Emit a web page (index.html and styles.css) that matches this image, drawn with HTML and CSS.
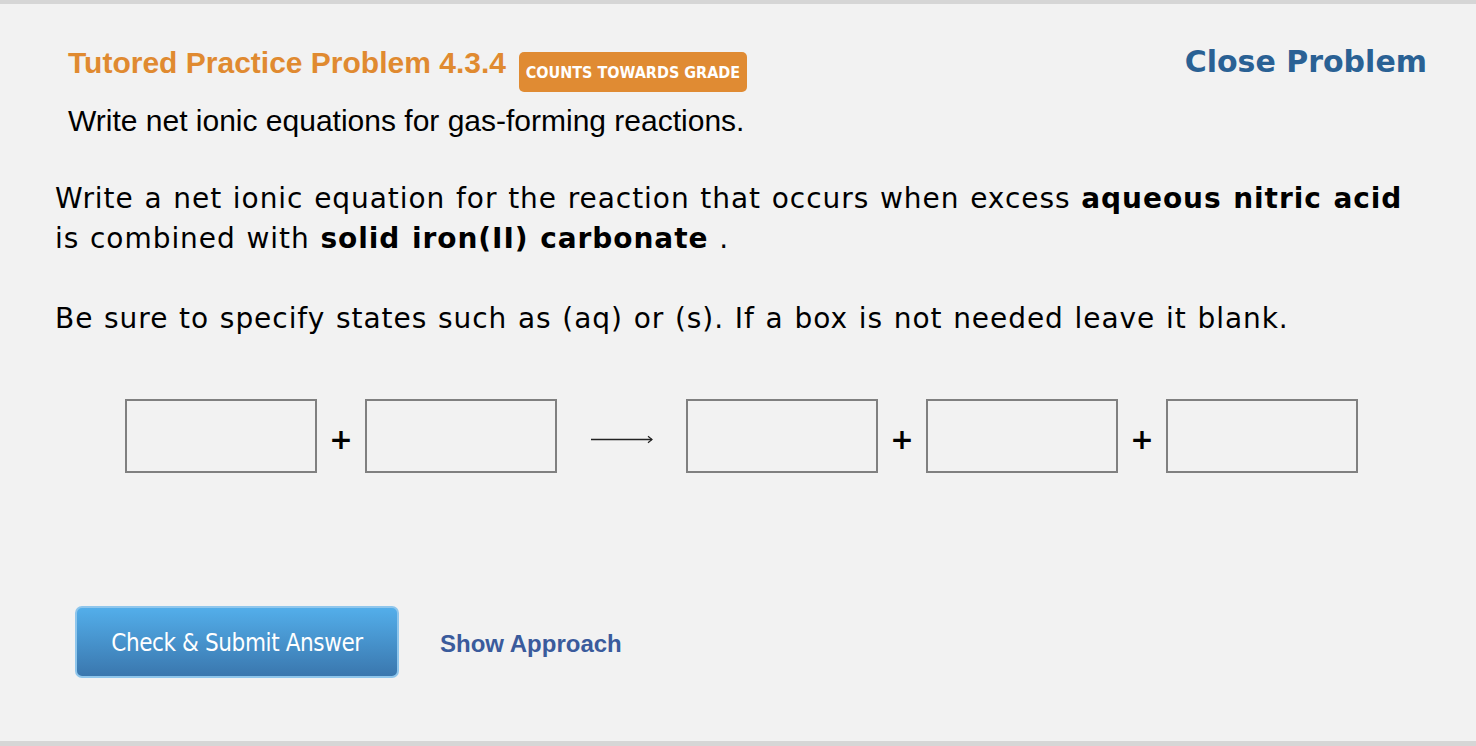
FILE: index.html
```html
<!DOCTYPE html>
<html>
<head>
<meta charset="utf-8">
<link rel="stylesheet" href="styles.css">
</head>
<body>
<div class="page">
  <header class="header">
    <div class="heading">
      <div class="title-row">
        <h1 class="title">Tutored Practice Problem 4.3.4</h1>
        <span class="badge">COUNTS TOWARDS GRADE</span>
      </div>
      <p class="subtitle">Write net ionic equations for gas-forming reactions.</p>
    </div>
    <a class="close" href="#">Close Problem</a>
  </header>

  <main class="content">
    <p class="question">Write a net ionic equation for the reaction that occurs when excess <b>aqueous nitric acid</b> is combined with <b>solid iron(II) carbonate</b> .</p>
    <p class="question">Be sure to specify states such as (aq) or (s). If a box is not needed leave it blank.</p>

    <div class="equation">
      <input class="box" type="text">
      <span class="plus">+</span>
      <input class="box" type="text">
      <span class="arrow"><svg width="62" height="10" viewBox="0 0 62 10"><path d="M0 5.5H61" stroke="#222" stroke-width="1.4" fill="none"/><path d="M57 2.2L61 5.5L57 8.8" stroke="#222" stroke-width="1.2" fill="none"/></svg></span>
      <input class="box" type="text">
      <span class="plus">+</span>
      <input class="box" type="text">
      <span class="plus">+</span>
      <input class="box" type="text">
    </div>

    <div class="actions">
      <button class="submit" type="button">Check &amp; Submit Answer</button>
      <a class="approach" href="#">Show Approach</a>
    </div>
  </main>
</div>
</body>
</html>
```

FILE: styles.css
```css
html, body {
  margin: 0;
  padding: 0;
  background: #f2f2f2;
}

.page {
  box-sizing: border-box;
  height: 746px;
  border-top: 4px solid #d6d6d6;
  border-bottom: 5px solid #d6d6d6;
  background: #f2f2f2;
}

.header {
  display: flex;
  justify-content: space-between;
  align-items: flex-start;
  padding: 42px 49px 0 68px;
}

.title-row {
  display: flex;
  align-items: flex-start;
}

.title {
  margin: -3px 0 0 0;
  font-family: "Liberation Sans", Arial, sans-serif;
  font-weight: bold;
  font-size: 30px;
  line-height: 40px;
  color: #e08a30;
}

.badge {
  margin: 6px 0 0 13px;
  box-sizing: border-box;
  height: 40px;
  width: 228px;
  display: flex;
  align-items: center;
  justify-content: center;
  background: #e08b33;
  border-radius: 5px;
  color: #fff;
  font-family: "DejaVu Sans Condensed", "DejaVu Sans", sans-serif;
  font-stretch: condensed;
  font-weight: bold;
  font-size: 16px;
  letter-spacing: 0;
}

.subtitle {
  margin: 9px 0 0 0;
  font-family: "Liberation Sans", Arial, sans-serif;
  font-size: 30px;
  line-height: 40px;
  color: #000;
}

.close {
  margin-top: -4px;
  font-family: "DejaVu Sans", Verdana, sans-serif;
  font-weight: bold;
  font-size: 30px;
  line-height: 40px;
  color: #2a6194;
  text-decoration: none;
}

.content {
  padding: 38px 0 0 55px;
}

.question {
  margin: 0 0 40px 0;
  width: 1360px;
  font-family: "DejaVu Sans", Verdana, sans-serif;
  font-size: 28px;
  line-height: 40px;
  letter-spacing: 0.95px;
  word-spacing: 0.9px;
  color: #000;
}

.question b {
  font-weight: bold;
}

.equation {
  display: flex;
  align-items: center;
  margin: 60px 0 0 70px;
  height: 74px;
}

.box {
  box-sizing: border-box;
  width: 192px;
  height: 74px;
  margin: 0;
  border: 2px solid #808080;
  background: #f2f2f2;
  padding: 0;
  flex: none;
}

.plus {
  width: 48px;
  flex: none;
  text-align: center;
  font-family: "DejaVu Sans", Verdana, sans-serif;
  font-weight: bold;
  font-size: 28px;
  line-height: 40px;
  margin-top: 7px;
  color: #000;
}

.arrow {
  width: 129px;
  flex: none;
  display: flex;
  justify-content: center;
  padding-top: 6px;
}

.arrow svg {
  display: block;
}

.actions {
  display: flex;
  align-items: center;
  margin: 133px 0 0 20px;
}

.submit {
  box-sizing: border-box;
  width: 324px;
  height: 72px;
  border: 2px solid #8fc6ec;
  border-radius: 7px;
  background: linear-gradient(#53aeea, #3a77ae);
  color: #fff;
  font-family: "DejaVu Sans Condensed", "DejaVu Sans", sans-serif;
  font-stretch: condensed;
  font-size: 24px;
  letter-spacing: -0.4px;
  padding: 2px 0 0 0;
}

.approach {
  margin-left: 41px;
  margin-top: 4px;
  font-family: "Liberation Sans", Arial, sans-serif;
  font-weight: bold;
  font-size: 24px;
  color: #3a5b9c;
  text-decoration: none;
}
```
